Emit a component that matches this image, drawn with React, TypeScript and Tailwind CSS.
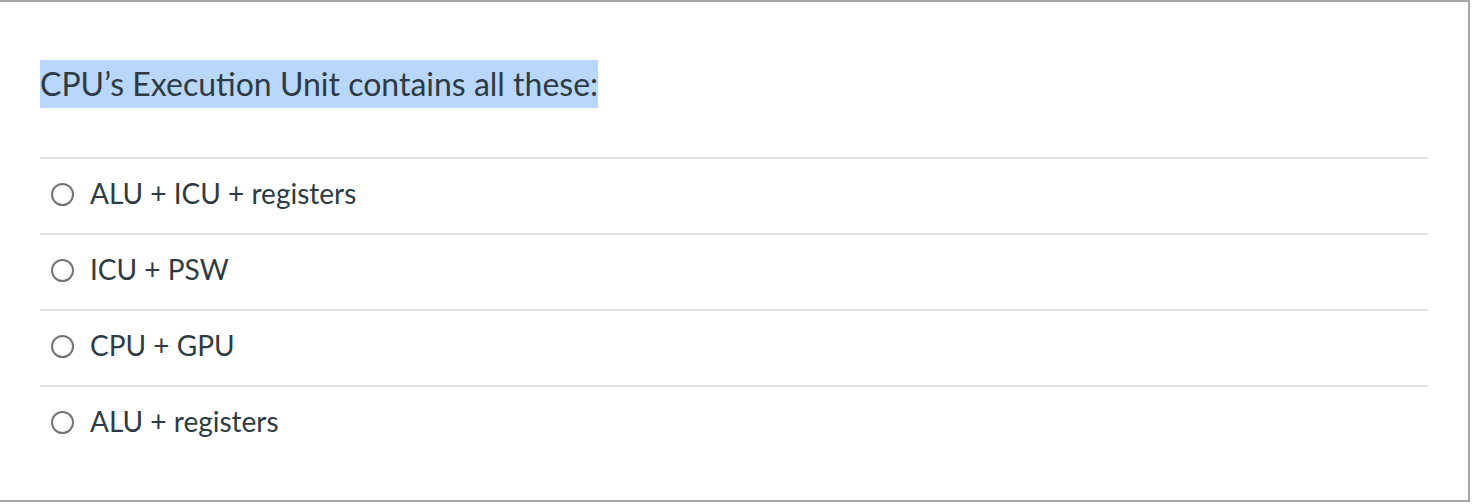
import React from "react";

const OPTIONS = ["ALU + ICU + registers", "ICU + PSW", "CPU + GPU", "ALU + registers"];

const Radio = () => (
  <span className="inline-block w-[23px] h-[23px] rounded-full border-2 border-[#737373] bg-white shrink-0 mt-[2px]" />
);

export default function App() {
  return (
    <div className="w-[1478px] h-[504px] bg-white" style={{ fontFamily: "Lato, 'Open Sans', sans-serif" }}>
      <div className="w-[1470px] h-[502px] border-t-2 border-r-2 border-b-2 border-[#a6a6a6] pl-[40px] pr-[40px] pt-[58px] text-[#2d3b45]">
        {/* question text, shown selected */}
        <p className="text-[32px] leading-[48px] h-[48px]">
          <span className="inline-block bg-[#b9d6fb] leading-[48px]">CPU’s Execution Unit contains all these:</span>
        </p>
        <div className="mt-[49px]">
          {OPTIONS.map((opt) => (
            <div key={opt} className="border-t-2 border-[#e0e0e0] h-[76px] flex items-center gap-[16px] pl-[11px] pb-[6px]">
              <Radio />
              <span className="text-[28px] leading-none">{opt}</span>
            </div>
          ))}
        </div>
      </div>
    </div>
  );
}
